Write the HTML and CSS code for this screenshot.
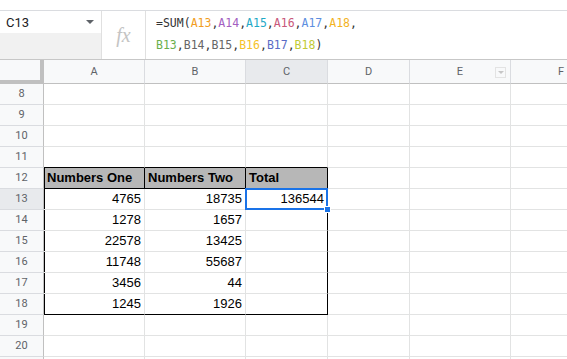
FILE: index.html
```html
<!DOCTYPE html>
<html lang="en">
<head>
  <meta charset="UTF-8" />
  <title>Sheet - SUM</title>
  <link rel="stylesheet" href="styles.css">
</head>
<body>
  <div class="topbar"></div>

  <div class="formula-bar">
    <div class="name-box">
      <div class="name-field"><span>C13</span><span class="caret"></span></div>
    </div>
    <div class="fx">fx</div>
    <div class="formula">=SUM(<span class="r1">A13</span>,<span class="r2">A14</span>,<span class="r3">A15</span>,<span class="r4">A16</span>,<span class="r5">A17</span>,<span class="r6">A18</span>,<br><span class="r7">B13</span>,<span class="r8">B14</span>,<span class="r8">B15</span>,<span class="r9">B16</span>,<span class="r10">B17</span>,<span class="r11">B18</span>)</div>
  </div>

  <div class="sheet">
    <!-- column headers -->
    <div class="corner"></div>
    <div class="col-hd">A</div>
    <div class="col-hd">B</div>
    <div class="col-hd active">C</div>
    <div class="col-hd">D</div>
    <div class="col-hd">E<span class="filter"></span></div>
    <div class="col-hd">F</div>

    <div class="row-hd">8</div><div class="cell"></div><div class="cell"></div><div class="cell"></div><div class="cell"></div><div class="cell"></div><div class="cell"></div>
    <div class="row-hd">9</div><div class="cell"></div><div class="cell"></div><div class="cell"></div><div class="cell"></div><div class="cell"></div><div class="cell"></div>
    <div class="row-hd">10</div><div class="cell"></div><div class="cell"></div><div class="cell"></div><div class="cell"></div><div class="cell"></div><div class="cell"></div>
    <div class="row-hd">11</div><div class="cell b-bot"></div><div class="cell b-bot"></div><div class="cell b-bot"></div><div class="cell"></div><div class="cell"></div><div class="cell"></div>

    <div class="row-hd">12</div>
    <div class="cell th b-left">Numbers One</div>
    <div class="cell th">Numbers Two</div>
    <div class="cell th">Total</div>
    <div class="cell"></div><div class="cell"></div><div class="cell"></div>

    <div class="row-hd active">13</div>
    <div class="cell num b-left">4765</div>
    <div class="cell num">18735</div>
    <div class="cell num b-right selected">136544<span class="handle"></span></div>
    <div class="cell"></div><div class="cell"></div><div class="cell"></div>

    <div class="row-hd">14</div>
    <div class="cell num b-left">1278</div>
    <div class="cell num">1657</div>
    <div class="cell b-right"></div>
    <div class="cell"></div><div class="cell"></div><div class="cell"></div>

    <div class="row-hd">15</div>
    <div class="cell num b-left">22578</div>
    <div class="cell num">13425</div>
    <div class="cell b-right"></div>
    <div class="cell"></div><div class="cell"></div><div class="cell"></div>

    <div class="row-hd">16</div>
    <div class="cell num b-left">11748</div>
    <div class="cell num">55687</div>
    <div class="cell b-right"></div>
    <div class="cell"></div><div class="cell"></div><div class="cell"></div>

    <div class="row-hd">17</div>
    <div class="cell num b-left">3456</div>
    <div class="cell num">44</div>
    <div class="cell b-right"></div>
    <div class="cell"></div><div class="cell"></div><div class="cell"></div>

    <div class="row-hd">18</div>
    <div class="cell num b-left b-bot">1245</div>
    <div class="cell num b-bot">1926</div>
    <div class="cell b-right b-bot"></div>
    <div class="cell"></div><div class="cell"></div><div class="cell"></div>

    <div class="row-hd">19</div><div class="cell"></div><div class="cell"></div><div class="cell"></div><div class="cell"></div><div class="cell"></div><div class="cell"></div>
    <div class="row-hd">20</div><div class="cell"></div><div class="cell"></div><div class="cell"></div><div class="cell"></div><div class="cell"></div><div class="cell"></div>
    <div class="row-hd"></div><div class="cell"></div><div class="cell"></div><div class="cell"></div><div class="cell"></div><div class="cell"></div><div class="cell"></div>
  </div>
</body>
</html>
```

FILE: styles.css
```css
* {
  box-sizing: border-box;
}
html, body {
  margin: 0;
  height: 359px;
  overflow: hidden;
  background: #fff;
}
body {
  font-family: Roboto, Arial, sans-serif;
  color: #202124;
}

.topbar {
  height: 11px;
  border-bottom: 1px solid #dadce0;
}

/* name box + formula */
.formula-bar {
  display: flex;
  height: 49px;
  border-bottom: 1px solid #c7c7c7;
}
.name-box {
  width: 102px;
  border-right: 1px solid #e0e0e0;
  background: #f1f1f1;
}
.name-field {
  height: 22px;
  background: #fff;
  display: flex;
  align-items: center;
  justify-content: space-between;
  padding: 0 7px 0 6px;
  font-size: 13px;
}
.caret {
  width: 0;
  height: 0;
  border-left: 4px solid transparent;
  border-right: 4px solid transparent;
  border-top: 4px solid #5f6368;
}
.fx {
  width: 44px;
  border-right: 1px solid #e0e0e0;
  display: flex;
  align-items: center;
  justify-content: center;
  font-family: "Liberation Serif", serif;
  font-style: italic;
  font-size: 20px;
  color: #c4c4c4;
}
.formula {
  padding: 1px 0 0 10px;
  font-family: "DejaVu Sans Mono", monospace;
  font-size: 11.5px;
  line-height: 22px;
  color: #333;
}
.r1 { color: #f29d22; }
.r2 { color: #a35fc1; }
.r3 { color: #1fa9c6; }
.r4 { color: #c8587b; }
.r5 { color: #5d8ee0; }
.r6 { color: #f3b31f; }
.r7 { color: #6aaf4a; }
.r8 { color: #666; }
.r9 { color: #f6c22a; }
.r10 { color: #5a6cc6; }
.r11 { color: #c1cb35; }

/* grid */
.sheet {
  display: grid;
  grid-template-columns: 44px 101px 101px 82px 82px 101px 101px;
  grid-template-rows: 24px;
  grid-auto-rows: 21px;
  font-family: "Liberation Sans", Arial, sans-serif;
  font-size: 13px;
}
.corner {
  background: #f8f9fa;
  border-right: 4px solid #c0c0c0;
  border-bottom: 4px solid #c0c0c0;
}
.col-hd {
  position: relative;
  background: #f8f9fa;
  border-right: 1px solid #dadce0;
  border-bottom: 1px solid #c0c0c0;
  text-align: center;
  line-height: 23px;
  font-family: Roboto, Arial, sans-serif;
  font-size: 11px;
  color: #5f6368;
}
.row-hd {
  background: #f8f9fa;
  border-right: 1px solid #c0c0c0;
  border-bottom: 1px solid #dadce0;
  text-align: center;
  line-height: 20px;
  font-family: Roboto, Arial, sans-serif;
  font-size: 11px;
  color: #5f6368;
}
.col-hd.active, .row-hd.active {
  background: #e8eaed;
}
.filter {
  position: absolute;
  left: 85px;
  top: 7px;
  width: 11px;
  height: 11px;
  border: 1px solid #e3e3e3;
}
.filter::after {
  content: "";
  position: absolute;
  left: 2px;
  top: 3px;
  border-left: 3px solid transparent;
  border-right: 3px solid transparent;
  border-top: 3px solid #c6c6c6;
}

.cell {
  position: relative;
  border-right: 1px solid #e2e3e3;
  border-bottom: 1px solid #e2e3e3;
  line-height: 20px;
  padding: 0 3px;
  white-space: nowrap;
  color: #000;
}
.num {
  text-align: right;
}
.th {
  background: #b7b7b7;
  font-weight: bold;
  border-right-color: #000;
  border-bottom-color: #000;
}
.b-left {
  box-shadow: inset 1px 0 #000;
}
.b-right {
  border-right-color: #000;
}
.b-bot {
  border-bottom-color: #000;
}

/* active cell */
.selected::before {
  content: "";
  position: absolute;
  top: -1px;
  left: -1px;
  right: -1px;
  bottom: -1px;
  border: 2px solid #1a73e8;
}
.handle {
  position: absolute;
  right: -4px;
  bottom: -4px;
  width: 7px;
  height: 7px;
  background: #1a73e8;
  border: 1px solid #fff;
  z-index: 1;
}
```
